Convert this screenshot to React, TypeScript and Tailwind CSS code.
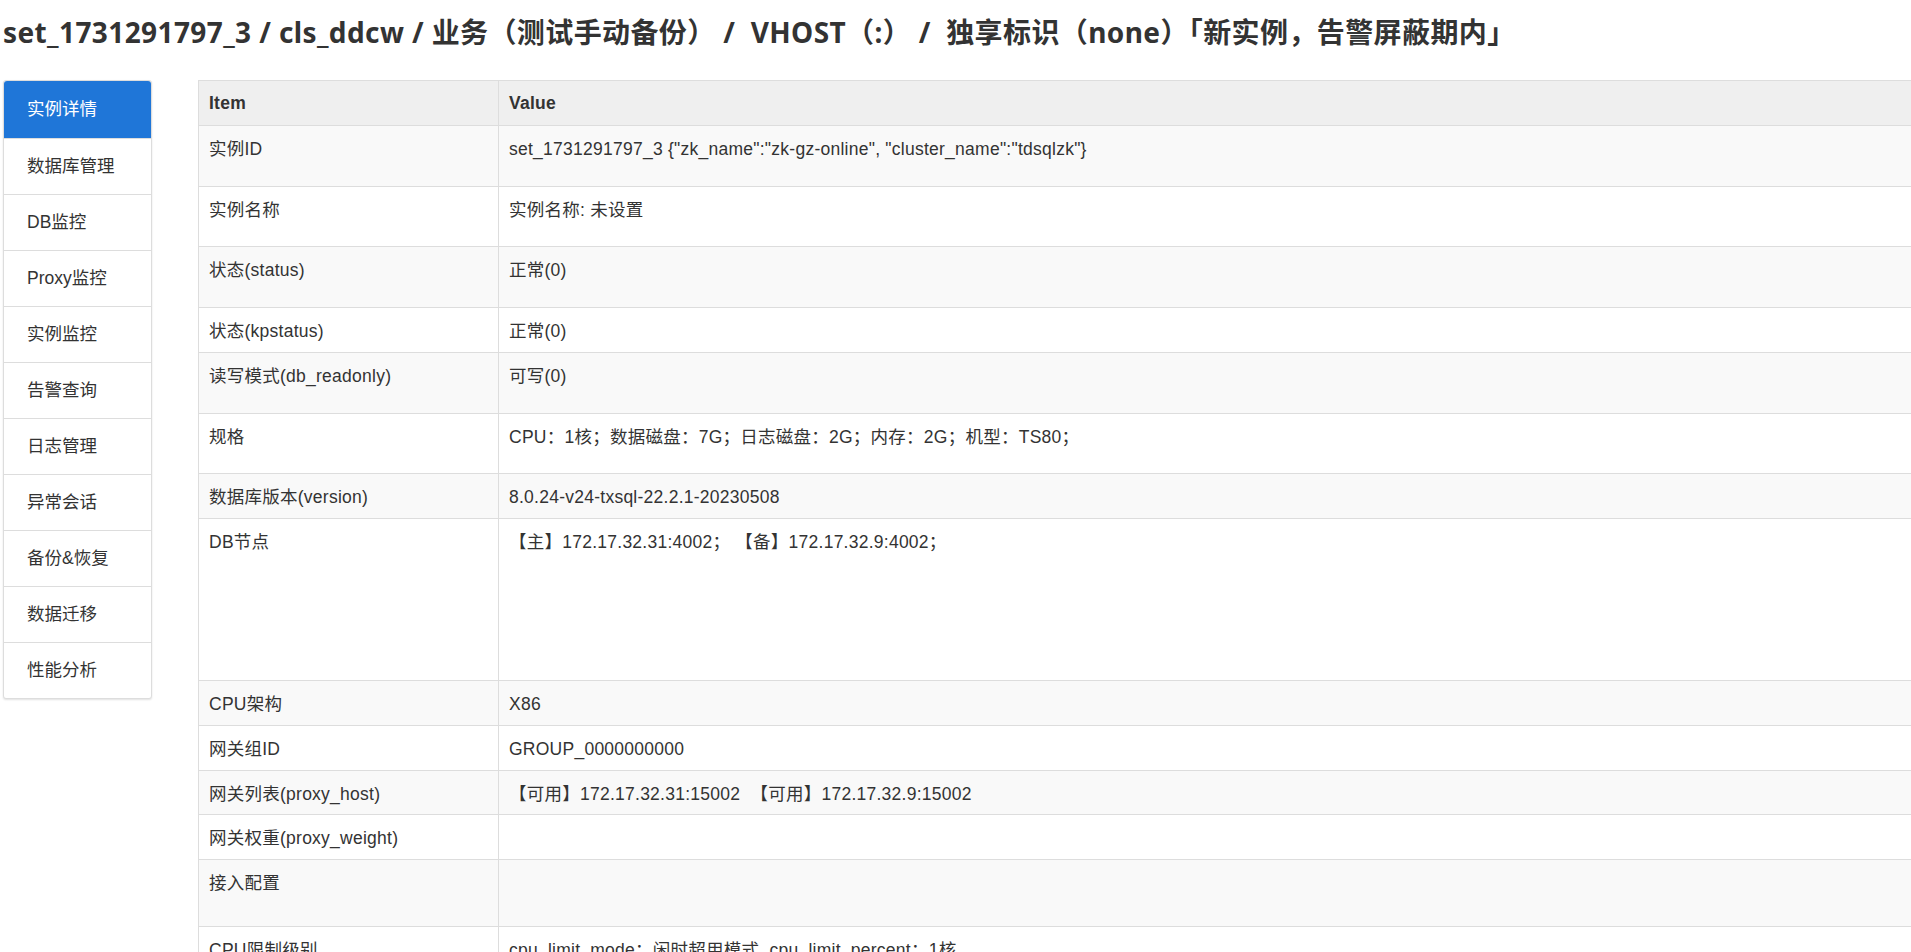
import React from 'react';

const menu = [
    '实例详情',
    '数据库管理',
    'DB监控',
    'Proxy监控',
    '实例监控',
    '告警查询',
    '日志管理',
    '异常会话',
    '备份&恢复',
    '数据迁移',
    '性能分析',
];

interface Row {
    item: string;
    value: string;
    h: string;
}

// row heights follow the page as rendered (some cells carry an empty line)
const rows: Row[] = [
    { item: '实例ID', value: 'set_1731291797_3 {"zk_name":"zk-gz-online", "cluster_name":"tdsqlzk"}', h: 'h-[61px]' },
    { item: '实例名称', value: '实例名称: 未设置', h: 'h-[60px]' },
    { item: '状态(status)', value: '正常(0)', h: 'h-[61px]' },
    { item: '状态(kpstatus)', value: '正常(0)', h: 'h-[45px]' },
    { item: '读写模式(db_readonly)', value: '可写(0)', h: 'h-[61px]' },
    { item: '规格', value: 'CPU：1核；数据磁盘：7G；日志磁盘：2G；内存：2G；机型：TS80；', h: 'h-[60px]' },
    { item: '数据库版本(version)', value: '8.0.24-v24-txsql-22.2.1-20230508', h: 'h-[45px]' },
    { item: 'DB节点', value: '【主】172.17.32.31:4002； 【备】172.17.32.9:4002；', h: 'h-[162px]' },
    { item: 'CPU架构', value: 'X86', h: 'h-[45px]' },
    { item: '网关组ID', value: 'GROUP_0000000000', h: 'h-[45px]' },
    { item: '网关列表(proxy_host)', value: '【可用】172.17.32.31:15002  【可用】172.17.32.9:15002', h: 'h-[44px]' },
    { item: '网关权重(proxy_weight)', value: '', h: 'h-[45px]' },
    { item: '接入配置', value: '', h: 'h-[67px]' },
    { item: 'CPU限制级别', value: 'cpu_limit_mode：闲时超用模式  cpu_limit_percent：1核', h: 'h-[61px]' },
];

export default function App() {
    return (
        <div
            className="h-[952px] w-[1911px] overflow-hidden bg-white text-[#333]"
            style={{ fontFamily: '"Liberation Sans", "Noto Sans CJK SC", sans-serif' }}
        >
            <h1
                className="pl-[3px] pt-[16px] text-[28px] font-bold leading-[33px] tracking-[0.4px] whitespace-pre text-[#333]"
                style={{ fontFamily: '"Noto Sans", "Noto Sans CJK SC", sans-serif' }}
            >
                set_1731291797_3 / cls_ddcw / 业务（测试手动备份） /  VHOST（:） /  独享标识（none）「新实例，告警屏蔽期内」
            </h1>

            <div className="mt-[31px] flex items-start">
                <div className="ml-[3px] w-[149px] shrink-0 rounded-[3px] border border-[#ddd] bg-white shadow-[0_1px_2px_rgba(0,0,0,0.12)]">
                    {menu.map((m, i) => (
                        <div
                            key={m}
                            className={
                                i === 0
                                    ? 'flex h-[57px] items-center rounded-t-[3px] bg-[#1f76d8] pl-[23px] text-[17.5px] text-white'
                                    : 'flex h-[56px] items-center border-t border-[#ddd] pl-[23px] text-[17.5px] text-[#333]'
                            }
                        >
                            {m}
                        </div>
                    ))}
                </div>

                <div className="ml-[46px] w-[1760px] shrink-0 border-l border-t border-[#ddd] text-[17.5px] tracking-[0.25px]">
                    <div className="flex h-[45px] border-b border-[#ddd] bg-[#efefef] font-bold">
                        <div className="w-[300px] shrink-0 border-r border-[#ddd] pl-[10px] pt-[9px] leading-[26px]">Item</div>
                        <div className="flex-1 pl-[10px] pt-[9px] leading-[26px]">Value</div>
                    </div>
                    {rows.map((r, i) => (
                        <div
                            key={r.item}
                            className={`flex ${r.h} border-b border-[#ddd] ${i % 2 === 0 ? 'bg-[#f9f9f9]' : 'bg-white'}`}
                        >
                            <div className="w-[300px] shrink-0 border-r border-[#ddd] pl-[10px] pt-[10px] leading-[26px]">
                                {r.item}
                            </div>
                            <div className="flex-1 whitespace-pre pl-[10px] pt-[10px] leading-[26px]">{r.value}</div>
                        </div>
                    ))}
                </div>
            </div>
        </div>
    );
}
